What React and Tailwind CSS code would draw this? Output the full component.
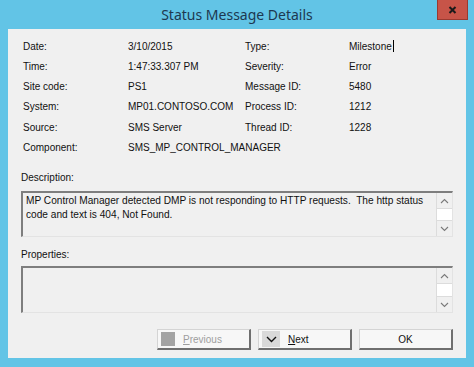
import React from "react";

// Windows 8 style "Status Message Details" dialog
const fields = [
  ["Date:", "3/10/2015", "Type:", "Milestone"],
  ["Time:", "1:47:33.307 PM", "Severity:", "Error"],
  ["Site code:", "PS1", "Message ID:", "5480"],
  ["System:", "MP01.CONTOSO.COM", "Process ID:", "1212"],
  ["Source:", "SMS Server", "Thread ID:", "1228"],
  ["Component:", "SMS_MP_CONTROL_MANAGER", "", ""],
];

const Chevron = ({ up }) => (
  <svg width="9" height="6" viewBox="0 0 9 6" className="block">
    <path
      d={up ? "M1 5 L4.5 1.5 L8 5" : "M1 1 L4.5 4.5 L8 1"}
      fill="none"
      stroke="#7a7a7a"
      strokeWidth="1.1"
    />
  </svg>
);

const ScrollBar = () => (
  <div className="flex h-full w-[16px] flex-col border-l border-[#dcdcdc] bg-[#f0f0f0]">
    <div className="flex h-[16px] items-center justify-center border-b border-[#dcdcdc]">
      <Chevron up />
    </div>
    <div className="flex-1 bg-white" />
    <div className="flex h-[16px] items-center justify-center border-t border-[#dcdcdc]">
      <Chevron />
    </div>
  </div>
);

const TextBox = ({ height, children }) => (
  <div
    className={`mx-[13px] flex border-t-2 border-l-2 border-r border-b border-t-[#7e7e7e] border-l-[#7e7e7e] border-r-[#e3e3e3] border-b-[#e3e3e3] bg-[#f0f0f0] ${height}`}
  >
    <div className="flex-1 pl-[3px] pt-[1px] text-[10.15px] leading-[14px] text-[#111]">{children}</div>
    <ScrollBar />
  </div>
);

const Button = ({ children, className = "" }) => (
  <div
    className={`flex h-[21px] w-[94px] items-center border border-t-[#d4d4d4] border-l-[#d4d4d4] border-r-2 border-b-2 border-r-[#6f6f6f] border-b-[#6f6f6f] bg-[#f7f7f7] ${className}`}
  >
    {children}
  </div>
);

export default function App() {
  return (
    <div
      className="relative flex h-[367px] w-[474px] flex-col overflow-hidden bg-[#62c4e6] text-[10px]"
      style={{ fontFamily: '"Liberation Sans", Arial, sans-serif' }}
    >
      {/* title bar */}
      <div className="flex h-[29px] items-center justify-center pb-[1px]">
        <span
          className="text-[14px] text-[#1d3850]"
          style={{ fontFamily: '"Noto Sans", "Open Sans", sans-serif' }}
        >
          Status Message Details
        </span>
      </div>
      <div className="absolute right-[6px] top-0 flex h-[20px] w-[31px] items-center justify-center border border-t-0 border-[#9a3a30] bg-[#c75448]">
        <svg width="9" height="8" viewBox="0 0 9 8">
          <path d="M1.5 1 L7.5 7 M7.5 1 L1.5 7" stroke="#1a1a1a" strokeWidth="2" />
        </svg>
      </div>

      {/* client area */}
      <div className="mx-[8px] h-[329px] bg-[#f0f0f0] pt-[7px]">
        <div className="flex flex-col">
          {fields.map(([l1, v1, l2, v2]) => (
            <div key={l1} className="flex h-[20.25px] items-center text-[#111]">
              <span className="w-[120px] pl-[15px]">{l1}</span>
              <span className="w-[117px] whitespace-nowrap">{v1}</span>
              <span className="w-[104px]">{l2}</span>
              <span className="flex items-center">
                {v2}
                {l2 === "Type:" && <span className="ml-[1px] inline-block h-[12px] w-px bg-black" />}
              </span>
            </div>
          ))}
        </div>

        <div className="mt-[13.5px] pl-[13px] leading-[14px] text-[#111]">Description:</div>
        <div className="mt-[6px]">
          <TextBox height="h-[46px]">
            MP Control Manager detected DMP is not responding to HTTP requests.&nbsp; The http status
            <br />
            code and text is 404, Not Found.
          </TextBox>
        </div>

        <div className="mt-[11px] pl-[13px] leading-[14px] text-[#111]">Properties:</div>
        <div className="mt-[4px]">
          <TextBox height="h-[47px]" />
        </div>

        <div className="mr-[13px] mt-[16px] flex justify-end gap-[7px]">
          <Button>
            <span className="ml-[3px] h-[14px] w-[14px] bg-[#a3a3a3]" />
            <span className="ml-[8px] text-[#9e9e9e]">
              <span className="underline">P</span>revious
            </span>
          </Button>
          <Button>
            <span className="ml-[3px] flex h-[16px] w-[18px] items-center justify-center bg-[#d9d9d9]">
              <svg width="11" height="7" viewBox="0 0 11 7">
                <path d="M1 1 L5.5 5.5 L10 1" fill="none" stroke="#111" strokeWidth="1.4" />
              </svg>
            </span>
            <span className="ml-[8px] text-[#111]">
              <span className="underline">N</span>ext
            </span>
          </Button>
          <Button className="justify-center">
            <span className="text-[#111]">OK</span>
          </Button>
        </div>
      </div>
    </div>
  );
}
